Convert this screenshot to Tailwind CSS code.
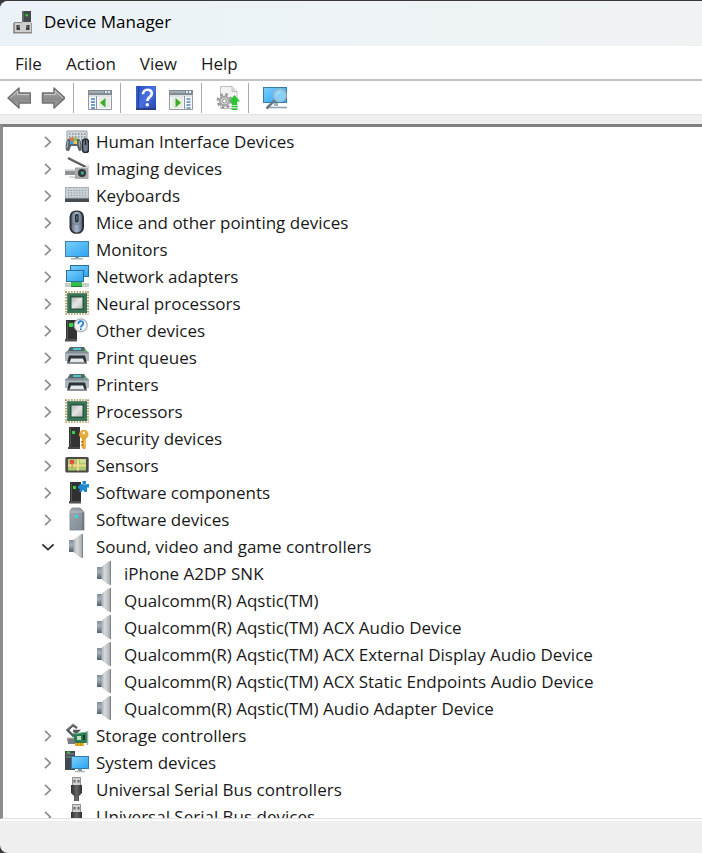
<!DOCTYPE html>
<html lang="en">
<head>
    <meta charset="UTF-8">
    <meta name="viewport" content="width=device-width, initial-scale=1.0">
    <title>Device Manager</title>
    <script src="https://cdn.jsdelivr.net/npm/@tailwindcss/browser@4"></script>
</head>
<body class="h-screen overflow-hidden bg-[#3c393c] pt-px font-['Open_Sans','Noto_Sans',sans-serif] text-[17px] text-[#191919]">

    <!-- Icon definitions -->
    <svg width="0" height="0" class="absolute" aria-hidden="true">
        <defs>
            <linearGradient id="g-screen" x1="0" y1="0" x2="1" y2="1"><stop offset="0" stop-color="#78cdfc"/><stop offset="1" stop-color="#2ea5f0"/></linearGradient>
            <linearGradient id="g-arrow" x1="0" y1="0" x2="0" y2="1"><stop offset="0" stop-color="#b4b4b4"/><stop offset="0.55" stop-color="#8a8a8a"/><stop offset="1" stop-color="#a8a8a8"/></linearGradient>
            <linearGradient id="g-help" x1="0" y1="0" x2="1" y2="1"><stop offset="0" stop-color="#2450c0"/><stop offset="0.5" stop-color="#4a6fe0"/><stop offset="1" stop-color="#2242a8"/></linearGradient>
            <linearGradient id="g-die" x1="0" y1="0" x2="1" y2="1"><stop offset="0" stop-color="#b5b5b5"/><stop offset="0.5" stop-color="#e6e6e6"/><stop offset="1" stop-color="#b9b9b9"/></linearGradient>
            <linearGradient id="g-cone" x1="0" y1="0" x2="1" y2="0"><stop offset="0" stop-color="#a9aeb3"/><stop offset="0.35" stop-color="#d8dadc"/><stop offset="0.8" stop-color="#b4b7ba"/><stop offset="1" stop-color="#8b9197"/></linearGradient>
            <linearGradient id="g-magnet" x1="0" y1="0" x2="0" y2="1"><stop offset="0" stop-color="#7f8d99"/><stop offset="0.4" stop-color="#a4b1bb"/><stop offset="1" stop-color="#4f5f6e"/></linearGradient>
            <linearGradient id="g-mouse" x1="0" y1="0" x2="1" y2="0"><stop offset="0" stop-color="#65768a"/><stop offset="0.5" stop-color="#a9b8c8"/><stop offset="1" stop-color="#5c6c80"/></linearGradient>
            <linearGradient id="g-box" x1="0" y1="0" x2="1" y2="1"><stop offset="0" stop-color="#a5adb4"/><stop offset="1" stop-color="#7b868f"/></linearGradient>
            <linearGradient id="g-usb" x1="0" y1="0" x2="1" y2="0"><stop offset="0" stop-color="#2e2e2e"/><stop offset="0.5" stop-color="#666"/><stop offset="1" stop-color="#303030"/></linearGradient>
        </defs>

        <symbol id="chevron" viewBox="0 0 12 12"><path d="M3 .8 8.300 6 3 11.200" fill="none" stroke="#8c8c8c" stroke-width="1.700"/></symbol>
        <symbol id="chevron-open" viewBox="0 0 12 12"><path d="M.4 3.400 6 8.600l5.600-5.200" fill="none" stroke="#303030" stroke-width="1.800"/></symbol>

        <symbol id="app" viewBox="0 0 24 24">
            <path d="M10 1h9v12h-9z" fill="#444a4c"/><path d="M10 1h2v12h-2z" fill="#606568"/><circle cx="14.700" cy="5.300" r="1.300" fill="#32d13b"/>
            <path d="M2 12h18v11H2z" fill="#cdcdcd"/><path d="M1 13h2v10H1zM19 13h1v10h-1z" fill="#999"/><path d="M2 12h8v1H2zM1 22h19v1.500H1z" fill="#8a8a8a"/>
            <path d="M4.500 15H8v5H4.500zM14 15h3.500v5H14z" fill="#3a3a3a"/><path d="M6 15h2v3H6zM14 15h2v3h-2z" fill="#666"/>
        </symbol>

        <symbol id="arrow-left" viewBox="0 0 24 24"><path d="M1 12 12 2v5h11.500v10H12v5z" fill="url(#g-arrow)" stroke="#707070" stroke-width="1.500" stroke-linejoin="round"/><path d="m3 12 7.700-7v3.500H22" fill="none" stroke="#c9c9c9"/></symbol>
        <symbol id="arrow-right" viewBox="0 0 24 24"><path d="M24 12 13 2v5H1.500v10H13v5z" fill="url(#g-arrow)" stroke="#707070" stroke-width="1.500" stroke-linejoin="round"/><path d="m22 12-7.700-7v3.500H3" fill="none" stroke="#c9c9c9"/></symbol>
        <symbol id="panel-left" viewBox="0 0 24 24">
            <path d="M.5 4.500h23v19H.5z" fill="#f4f6f7" stroke="#92999f"/><path d="M0 4h24v5H0z" fill="#808b96"/><path d="M1 6h15" stroke="#c3cbd2"/><path d="M17 6h2M20 6h2" stroke="#e6eaee" stroke-width="2"/>
            <path d="M1 10h23" stroke="#c8cdd1"/><path d="M8.500 10v13" stroke="#8c959d"/><path d="M3 13h4M3 16h4M3 19h4M3 22h4" stroke="#3d82c9" stroke-width="1.300"/>
            <path d="M11 11h11v11H11z" fill="#e8ece9"/><path d="M17.500 12v9.500L12 16.700z" fill="#3bad25"/>
        </symbol>
        <symbol id="help-book" viewBox="0 0 24 24">
            <path d="M1 0h20v24H1z" fill="url(#g-help)"/><path d="M1 0h3v24H1z" fill="#1c3e9f"/><path d="M2 0v24" stroke="#5a7bdb"/><path d="M1 23h20" stroke="#2b3e84" stroke-width="2"/>
            <path d="M8 8.300c0-6 8.800-5.900 8.800-.8 0 3.700-4.500 3.500-4.500 7.500" fill="none" stroke="#fff" stroke-width="2.700"/><circle cx="12.300" cy="18.800" r="1.700" fill="#fff"/>
        </symbol>
        <symbol id="panel-right" viewBox="0 0 24 24">
            <path d="M.5 4.500h23v19H.5z" fill="#f4f6f7" stroke="#92999f"/><path d="M0 4h24v5H0z" fill="#808b96"/><path d="M1 6h15" stroke="#c3cbd2"/><path d="M17 6h2M20 6h2" stroke="#e6eaee" stroke-width="2"/>
            <path d="M1 10h23" stroke="#c8cdd1"/><path d="M15.500 10v13" stroke="#8c959d"/><path d="M17.500 13h4M17.500 16h4M17.500 19h4M17.500 22h4" stroke="#5a89bb" stroke-width="1.300"/>
            <path d="M3 11h11v11H3z" fill="#e8ece9"/><path d="M6.500 12v9.500l5.500-4.800z" fill="#3bad25"/>
        </symbol>
        <symbol id="update" viewBox="0 0 24 24">
            <path d="M4.500.5H16l5 5v17H4.500z" fill="#f3f3f3" stroke="#bfbfbf"/><path d="M16 .5v5h5" fill="#ddd" stroke="#bfbfbf"/>
            <circle cx="8.500" cy="15" r="6.500" fill="none" stroke="#9c9c9c" stroke-width="3" stroke-dasharray="2.600 2.500"/><circle cx="8.500" cy="15" r="4.400" fill="#e4e4e4" stroke="#a5a5a5" stroke-width="2.200"/><circle cx="8.500" cy="15" r="2" fill="#fff" stroke="#888"/>
            <path d="m18.500 9 5.500 6.500h-3V19h-5v-3.500h-3z" fill="#2bc532"/><path d="M15.500 20.500h6M15.500 23.300h6" stroke="#2bc532" stroke-width="1.700"/>
        </symbol>
        <symbol id="scan" viewBox="0 0 24 24">
            <path d="M0 1h24v16H0z" fill="#367ea9"/><path d="M1 2h22v14H1z" fill="url(#g-screen)"/><path d="M11 17h4v3h-4z" fill="#a3b1bb"/><path d="M5 21.500h19" stroke="#8aa0ae" stroke-width="1.500"/>
            <path d="m12 14-8.500 8.500" stroke="#6c7a86" stroke-width="2.500"/><circle cx="17" cy="9.500" r="6" fill="#86d1fa" stroke="#a6bccb" stroke-width="1.700"/><path d="M13.500 9c.5-2 2-3 4-3" fill="none" stroke="#c3ebff"/>
        </symbol>

        <symbol id="hid" viewBox="0 0 24 24">
            <path d="M2 2h20v11H2z" fill="#d4dade" stroke="#9aa3aa"/><path d="M4 5h17M4 8h17M4 11h17" stroke="#838c93" stroke-width="1.300" stroke-dasharray="1.500 1.500"/>
            <path d="M3 10c3-1 8-1 11 0 3 3 3 7 2.500 11-1 2-3 1-3.500-1l-1-3H6l-1 3c-.6 2-2.800 3-4 1C.3 18 .5 13 3 10z" fill="#59646e"/><path d="M3 12l-1 7M14 12l1 6" stroke="#a7b1ba"/>
            <path d="M5 8.500h3.500V12H5z" fill="#ed6b49"/><path d="M8.500 8.500H12V12H8.500z" fill="#8bc34a"/><path d="M5 12h3.500v3H5z" fill="#35a4e6"/><path d="M8.500 12H12v3H8.500z" fill="#f7c545"/>
            <rect x="17.500" y="10" width="6" height="13.500" rx="3" fill="#6d7e90" stroke="#26292d" stroke-width="1.500"/><path d="M20.500 11v5" stroke="#24292f" stroke-width="1.500"/>
        </symbol>
        <symbol id="imaging" viewBox="0 0 24 24">
            <path d="m3 2 18 9" stroke="#4a4a4a" stroke-width="2.200"/><path d="m3 1.500 18 8.700" stroke="#a0a0a0" stroke-width=".6"/>
            <path d="M0 13h10v6H0z" fill="#8f9193"/><path d="M0 13h10v2H0z" fill="#d7d7d7"/><path d="M4 20h7v2H4z" fill="#d9dadb"/>
            <path d="M10 11h10l3.500-2v14H10z" fill="#a7abac"/><path d="M10 11h10l3.500-2v3H10z" fill="#d2d4d5"/><circle cx="17" cy="17" r="4" fill="#303638"/><circle cx="17.300" cy="17" r="1.700" fill="#3ba69a"/>
        </symbol>
        <symbol id="keyboard" viewBox="0 0 24 24">
            <path d="M0 4h24v12H0z" fill="#a6b0b7"/><path d="M1 5h22v9.500H1z" fill="#cbd2d7"/><path d="M3 7.500h18M3 10h18M3 12.500h18" stroke="#8c969d" stroke-width="1.200" stroke-dasharray="1.200 1.600"/><path d="M0 15h24v4H0z" fill="#454c52"/><path d="M0 15.500h24" stroke="#777f85"/>
        </symbol>
        <symbol id="mouse" viewBox="0 0 24 24">
            <rect x="4.500" y=".4" width="14.500" height="23.400" rx="6.500" fill="#2c3036"/><rect x="6.500" y="1.800" width="10.500" height="20.600" rx="4.800" fill="url(#g-mouse)"/><path d="M7 13c2 1.600 8 1.600 10 0" fill="none" stroke="#65768a"/><rect x="10" y="4" width="3.600" height="8.500" rx="1.500" fill="#222b35"/><path d="M11.800 5.500v5" stroke="#61758b" stroke-width="1.200"/>
        </symbol>
        <symbol id="monitor" viewBox="0 0 24 24">
            <path d="M0 4h24v16H0z" fill="#3c80ad"/><path d="M1 5h22v14H1z" fill="url(#g-screen)"/><path d="M10 20h4v1.500h-4z" fill="#83929c"/><path d="M6 21.800h12" stroke="#a7b3ba" stroke-width="1.500"/>
        </symbol>
        <symbol id="network" viewBox="0 0 24 24">
            <path d="M5 1h19v12H5z" fill="#286e9b"/><path d="M6 2h17v10H6z" fill="url(#g-screen)"/><path d="M1 6h18v12H1z" fill="#286e9b"/><path d="M2 7h16v10H2z" fill="url(#g-screen)"/>
            <path d="M9 18h4v2H9z" fill="#2da53b"/><path d="M0 19h24v4H0z" fill="#c9cecb"/><path d="M6 18h11v5H6z" fill="#36bc48"/><path d="M6 22.500h11" stroke="#228232"/>
        </symbol>
        <symbol id="chip" viewBox="0 0 24 24">
            <path d="M.5 1h23M.5 23h23M1 .5v23M23 .5v23" stroke="#a68a48" stroke-width="1.600" stroke-dasharray="1.500 1.300"/><path d="M2 2h20v20H2z" fill="#3a7355"/><path d="M2.500 21.500v-19h19" fill="none" stroke="#5c8c73"/><path d="M5 5h14v14H5z" fill="#285a40"/><path d="M6.500 6.500h11v11h-11z" fill="url(#g-die)"/>
        </symbol>
        <symbol id="other" viewBox="0 0 24 24">
            <path d="M1 2h11v20H1z" fill="#343434"/><path d="M0 21h12v2.500H0z" fill="#505050"/><path d="M2 3h1v18H2z" fill="#5a5a5a"/><path d="M4 5h4v4H4z" fill="#2ddb3b"/>
            <circle cx="15.700" cy="7.300" r="6.500" fill="#f1f5f8" stroke="#a9b0b7" stroke-width="1.200"/><path d="M13.300 6c0-3.800 5-3.600 5-.6 0 2.200-2.500 2-2.500 4" fill="none" stroke="#2380cf" stroke-width="1.700"/><circle cx="15.800" cy="11.300" r="1" fill="#2380cf"/>
        </symbol>
        <symbol id="printer" viewBox="0 0 24 24">
            <path d="M5 2h14l3 5H2z" fill="#596266"/><path d="M8 3h8v2H8z" fill="#43c9cf"/><path d="M1 6.500h22l1 2V16H0V8.500z" fill="#aeb7bd"/><path d="M1 6.500h22l1 2H0z" fill="#848f96"/><path d="M19 5h2.500v1.500H19z" fill="#36cc49"/>
            <path d="M4 10.500h16l2 8H2z" fill="#2c3338"/><path d="M6 13.500h12l1.500 4h-15z" fill="#e4e7e8"/><path d="M2 18h20" stroke="#878e93"/>
        </symbol>
        <symbol id="security" viewBox="0 0 24 24">
            <path d="M4 1h11v20H4z" fill="#343434"/><path d="M3 21h12v2H3z" fill="#484848"/><path d="M5 2h1v18H5z" fill="#555"/><path d="M7 5h3v3H7z" fill="#2ddb3b"/>
            <circle cx="18.800" cy="8.500" r="4.700" fill="#e5a93c"/><circle cx="18.800" cy="7" r="1.400" fill="#fff3cf"/><path d="M17 12h4v10l-1.500 1.500L17 22z" fill="#dca039"/><path d="M20 13v9" stroke="#f8d68a"/><path d="M16 15h2v1.500h-2zM16 18.500h2V20h-2z" fill="#b67c20"/>
        </symbol>
        <symbol id="sensor" viewBox="0 0 24 24">
            <rect x=".3" y="4" width="23.400" height="15.500" rx="1.500" fill="#4c4947"/><path d="M3 6h18v11.500H3z" fill="#a9c96f"/><path d="M3 12.500h18M13 6v11.500" stroke="#f4dc8c" stroke-width="2"/><path d="M15 6h6v4h-6z" fill="#d1db91"/><path d="M5 7h4v4H5z" fill="#e94740"/><path d="M6.500 10.500H8V15H6.500z" fill="#e88c62"/>
        </symbol>
        <symbol id="component" viewBox="0 0 24 24">
            <path d="M5 2h11v19H5z" fill="#303030"/><path d="M4 21h12v2.500H4z" fill="#505050"/><path d="M6 3h1v18H6z" fill="#555"/><path d="M8 6h3v3H8z" fill="#2ddb3b"/><path d="M17.500 1H21v3h3v3.500h-2V12h-3v-1.500h-2V12h-2.500V8.500H13V6h1.500V4h3z" fill="#2187cb"/><path d="M17.500 4.500H22" stroke="#68b6e7"/>
        </symbol>
        <symbol id="softdev" viewBox="0 0 24 24">
            <path d="M7 1h8l4 4v18H5V4z" fill="url(#g-box)" stroke="#7c858c" stroke-width=".8"/><path d="M5 5h14" stroke="#b8bfc4"/><path d="M18 5v18" stroke="#606b74"/><path d="M10 8h3v3h-3z" fill="#38d8e6"/>
        </symbol>
        <symbol id="speaker" viewBox="0 0 24 24">
            <path d="M4 6h6v12H4z" fill="url(#g-magnet)"/><path d="M8.500 6.500 9.500 5 15.500.5 18 0v24l-2.500-.5-6-4.500-1-1.500z" fill="url(#g-cone)"/><path d="M17.500 0v24" stroke="#7b838b"/>
        </symbol>
        <symbol id="storage" viewBox="0 0 24 24">
            <path d="M12 5 8 2 2.500 7 8 12.500l5-4.500H8" fill="none" stroke="#56595c" stroke-width="2.400"/><path d="M12 4 8 1.200 2.500 6" fill="none" stroke="#a4a7aa" stroke-width=".8"/><path d="M2 15h7l3 3v3H3z" fill="#777c80"/><path d="M2 15h7" stroke="#b6babd"/>
            <path d="m8 11 14-2v11H10z" fill="#277b4d"/><path d="m8 11 14-2" stroke="#78b694"/><path d="M22.500 8v14" stroke="#a3a8aa" stroke-width="1.500"/><path d="M12 13h4v4h-4z" fill="#c2d9ca"/><path d="M18 12h2v5h-2z" fill="#123d28"/><path d="M10 20h9v3h-9z" fill="#eba922"/><path d="M12.500 20v3M15.500 20v3" stroke="#b97c0c" stroke-width=".7"/>
        </symbol>
        <symbol id="system" viewBox="0 0 24 24">
            <path d="M0 1h10v19H0z" fill="#42484c"/><path d="M1 4h8M1 7h8" stroke="#8d969b"/><path d="M2 1.500h3v1.500H2z" fill="#39d44c"/><path d="M6 6h18v13H6z" fill="#337ba9"/><path d="M7 7h16v11H7z" fill="url(#g-screen)"/><path d="M13 19h4v2h-4z" fill="#8596a1"/><path d="M10 21.500h10" stroke="#a9b8c1" stroke-width="1.500"/>
        </symbol>
        <symbol id="usb" viewBox="0 0 24 24">
            <path d="M7.500.5h8V9h-8z" fill="#d0d0d0" stroke="#919191"/><path d="M8.500 3h2v2.500h-2zM12.500 3h2v2.500h-2z" fill="#666"/><path d="M6 8h11v8l-3 3v5H9v-5l-3-3z" fill="url(#g-usb)"/><path d="M9 20h5M9 22h5" stroke="#727272" stroke-width=".8"/>
        </symbol>
    </svg>

    <div class="flex h-full flex-col overflow-hidden rounded-l-lg bg-[#efefef]">
        <!-- Title bar -->
        <header class="flex h-[45px] shrink-0 items-center gap-2 bg-linear-to-r from-[#ebf3f8] to-[#eff3f4] pb-[3px] pl-3 text-black">
            <svg class="size-6"><use href="#app"/></svg>
            <h1 class="leading-6">Device Manager</h1>
        </header>

        <!-- Menu bar -->
        <nav class="flex h-[33px] shrink-0 items-center gap-6 bg-white pt-0.5 pl-[15px]">
            <button>File</button>
            <button>Action</button>
            <button>View</button>
            <button>Help</button>
        </nav>

        <!-- Toolbar -->
        <div class="flex h-9 shrink-0 items-center border-t-2 border-b border-t-[#c3c3c7] border-b-[#e2e2e2] bg-white pt-px pl-[7px]">
            <button aria-label="Back"><svg class="size-6"><use href="#arrow-left"/></svg></button>
            <button aria-label="Forward" class="ml-2.5"><svg class="size-6"><use href="#arrow-right"/></svg></button>
            <div class="mr-3.5 ml-2 h-[30px] w-px bg-[#aaa]"></div>
            <button aria-label="Show/Hide Console Tree"><svg class="size-6"><use href="#panel-left"/></svg></button>
            <div class="mr-3.5 ml-2 h-[30px] w-px bg-[#aaa]"></div>
            <button aria-label="Help"><svg class="size-6"><use href="#help-book"/></svg></button>
            <button aria-label="Show/Hide Action Pane" class="ml-2.5"><svg class="size-6"><use href="#panel-right"/></svg></button>
            <div class="mr-3.5 ml-2 h-[30px] w-px bg-[#aaa]"></div>
            <button aria-label="Update driver"><svg class="size-6"><use href="#update"/></svg></button>
            <div class="mr-3.5 ml-2 h-[30px] w-px bg-[#aaa]"></div>
            <button aria-label="Scan for hardware changes"><svg class="size-6"><use href="#scan"/></svg></button>
        </div>

        <!-- Device tree -->
        <main class="mt-[9px] min-h-0 flex-1 overflow-hidden border-t-3 border-b border-l-3 border-t-[#808080] border-b-[#e0e0e0] border-l-[#8c8c8c] bg-white pt-[2px] pl-[39px] leading-[25px] whitespace-nowrap">
            <ul id="tree"></ul>
        </main>

        <!-- Status bar -->
        <footer class="h-[34px] shrink-0 border-t-2 border-white"></footer>
    </div>

    <script>
        const devices = [
            ['hid', 'Human Interface Devices'],
            ['imaging', 'Imaging devices'],
            ['keyboard', 'Keyboards'],
            ['mouse', 'Mice and other pointing devices'],
            ['monitor', 'Monitors'],
            ['network', 'Network adapters'],
            ['chip', 'Neural processors'],
            ['other', 'Other devices'],
            ['printer', 'Print queues'],
            ['printer', 'Printers'],
            ['chip', 'Processors'],
            ['security', 'Security devices'],
            ['sensor', 'Sensors'],
            ['component', 'Software components'],
            ['softdev', 'Software devices'],
            ['speaker', 'Sound, video and game controllers', [
                'iPhone A2DP SNK',
                'Qualcomm(R) Aqstic(TM)',
                'Qualcomm(R) Aqstic(TM) ACX Audio Device',
                'Qualcomm(R) Aqstic(TM) ACX External Display Audio Device',
                'Qualcomm(R) Aqstic(TM) ACX Static Endpoints Audio Device',
                'Qualcomm(R) Aqstic(TM) Audio Adapter Device',
            ]],
            ['storage', 'Storage controllers'],
            ['system', 'System devices'],
            ['usb', 'Universal Serial Bus controllers'],
            ['usb', 'Universal Serial Bus devices'],
        ];

        const label = (icon, name) => `<svg class="mr-[7px] size-6"><use href="#${icon}"/></svg><span>${name}</span>`;

        document.getElementById('tree').innerHTML = devices.map(([icon, name, children]) => `
            <li>
                <div class="flex h-[27px] items-start">
                    <button class="mr-[11px] flex h-[26px] items-center" aria-label="${name}" aria-expanded="${!!children}">
                        <svg class="size-3"><use href="#${children ? 'chevron-open' : 'chevron'}"/></svg>
                    </button>
                    ${label(icon, name)}
                </div>
                ${children ? `<ul class="pl-[51px]">${children.map(c => `<li class="flex h-[27px] items-start">${label(icon, c)}</li>`).join('')}</ul>` : ''}
            </li>`).join('');
    </script>
</body>
</html>
